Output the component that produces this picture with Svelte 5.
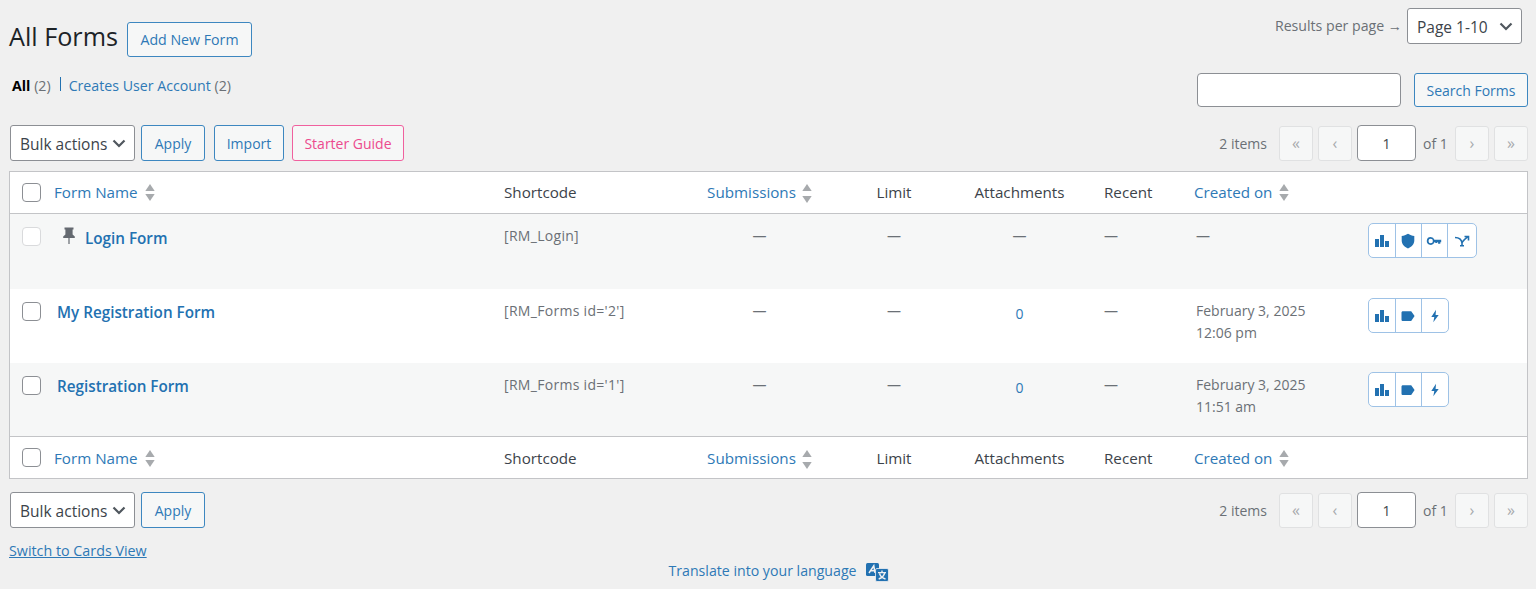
<script lang="ts">
  interface Form {
    name: string;
    shortcode: string;
    attachments: string;
    created: string[];
    pinned?: boolean;
    actions: string[];
  }

  const forms: Form[] = [
    { name: 'Login Form', shortcode: '[RM_Login]', attachments: '—', created: ['—'], pinned: true, actions: ['chart', 'shield', 'key', 'split'] },
    { name: 'My Registration Form', shortcode: "[RM_Forms id='2']", attachments: '0', created: ['February 3, 2025', '12:06 pm'], actions: ['chart', 'label', 'bolt'] },
    { name: 'Registration Form', shortcode: "[RM_Forms id='1']", attachments: '0', created: ['February 3, 2025', '11:51 am'], actions: ['chart', 'label', 'bolt'] },
  ];

  let search = $state('');
</script>

{#snippet chevron()}
  <svg class="chevron" viewBox="0 0 14 9" width="14" height="9"><path d="M1.500 1.500 7 7l5.500-5.500" fill="none" stroke="#50575e" stroke-width="2.200"/></svg>
{/snippet}

{#snippet sorter(wide: boolean)}
  <span class="sorter" class:wide>
    <svg viewBox="0 0 10 7" width="10" height="7"><path d="M5 0l4.700 7H.3z" fill="#a7aaad"/></svg>
    <svg viewBox="0 0 10 7" width="10" height="7"><path d="M5 7l4.700-7H.3z" fill="#a7aaad"/></svg>
  </span>
{/snippet}

{#snippet icon(name: string)}
  <svg viewBox="0 0 16 16" width="16" height="16" fill="#2271b1">
    {#if name === 'chart'}
      <path d="M1 6h4v8H1zM6 2h4v12H6zM11 8h4v6h-4z"/>
    {:else if name === 'shield'}
      <path d="M8 .8C10.100 2 12 2.700 14.300 3v4.500c0 3.700-2.600 6.400-6.300 8-3.700-1.600-6.300-4.300-6.300-8V3C4 2.700 5.900 2 8 .8z"/>
    {:else if name === 'key'}
      <path fill-rule="evenodd" d="M4.700 4.100a3.900 3.900 0 0 1 3.700 2.700h6.800v2.400h-.9v1.500h-2.200V9.200h-.9v.9H9.300v-.9h-.9A3.900 3.900 0 1 1 4.700 4.100zm0 1.700a2.200 2.200 0 1 0 0 4.400 2.200 2.200 0 0 0 0-4.400z"/>
    {:else if name === 'split'}
      <path d="M1 4.500C4.500 4.500 7.500 6.500 8 10v3M8 10c.5-2 2.500-3.500 5.500-6M6 12.800h4M10.500 3.500h4v4" fill="none" stroke="#2271b1" stroke-width="1.600"/>
    {:else if name === 'label'}
      <path d="M3 3.200h8.200L14.600 8l-3.400 5H3c-1 0-1.500-.5-1.500-1.500v-6.800c0-1 .5-1.500 1.500-1.500z"/>
    {:else}
      <path d="M9 1.800 4.300 9h3L6.300 14.300 11.700 7H8.600z"/>
    {/if}
  </svg>
{/snippet}

{#snippet pagination()}
  <div class="pages">
    <span class="count">2 items</span>
    <button class="page" disabled>«</button>
    <button class="page" disabled>‹</button>
    <input class="current" value="1" />
    <span class="total">of 1</span>
    <button class="page" disabled>›</button>
    <button class="page" disabled>»</button>
  </div>
{/snippet}

{#snippet columns()}
  <div class="row head">
    <div><input type="checkbox" /></div>
    <div><a href="#top">Form Name</a>{@render sorter(false)}</div>
    <div>Shortcode</div>
    <div class="mid"><a href="#top">Submissions</a>{@render sorter(true)}</div>
    <div class="mid">Limit</div>
    <div class="mid">Attachments</div>
    <div>Recent</div>
    <div><a href="#top">Created on</a>{@render sorter(false)}</div>
    <div></div>
  </div>
{/snippet}

<div class="wrap">
  <header>
    <div class="left">
      <div class="title">
        <h1>All Forms</h1>
        <button class="btn add">Add New Form</button>
      </div>
      <div class="filters">
        <span><strong>All</strong> (2)</span>
        <span class="sep"></span>
        <span><a href="#top">Creates User Account</a> (2)</span>
      </div>
    </div>
    <div class="right">
      <div class="per-page">
        <span>Results per page →</span>
        <button class="select">Page 1-10 {@render chevron()}</button>
      </div>
      <div class="search">
        <input type="text" bind:value={search} />
        <button class="btn">Search Forms</button>
      </div>
    </div>
  </header>

  <div class="tablenav">
    <button class="select bulk">Bulk actions {@render chevron()}</button>
    <button class="btn apply">Apply</button>
    <button class="btn import">Import</button>
    <button class="btn guide">Starter Guide</button>
    {@render pagination()}
  </div>

  <div class="table">
    {@render columns()}
    {#each forms as form}
      <div class="row item">
        <div><input type="checkbox" disabled={form.pinned} /></div>
        <div class="name" class:pinned={form.pinned}>
          {#if form.pinned}
            <svg class="pin" viewBox="0 0 12 17" width="12" height="17"><path d="M1.500.5h9v2H9.600v5l2.200 2v1.600H6.600V17H5.400v-5.900H.2V9.500l2.200-2v-5h-.9z" fill="#646970"/></svg>
          {/if}
          <a href="#top">{form.name}</a>
        </div>
        <div class="code">{form.shortcode}</div>
        <div class="mid">—</div>
        <div class="mid">—</div>
        <div class="mid">
          {#if form.attachments === '0'}<a class="zero" href="#top">0</a>{:else}{form.attachments}{/if}
        </div>
        <div>—</div>
        <div class="created">
          {#each form.created as line}<div>{line}</div>{/each}
        </div>
        <div>
          <div class="actions">
            {#each form.actions as action}
              <button class={action}>{@render icon(action)}</button>
            {/each}
          </div>
        </div>
      </div>
    {/each}
    {@render columns()}
  </div>

  <div class="tablenav bottom">
    <button class="select bulk">Bulk actions {@render chevron()}</button>
    <button class="btn apply">Apply</button>
    {@render pagination()}
  </div>

  <a class="switch" href="#top">Switch to Cards View</a>

  <footer>
    <a href="#top">Translate into your language</a>
    <svg viewBox="0 0 23 19" width="23" height="19">
      <rect x="0" y="0" width="13" height="13" rx="1.500" fill="#2271b1"/>
      <path d="M3 10 7.800 2.800 9 10M4.500 7.800h4" fill="none" stroke="#f0f0f1" stroke-width="1.500"/>
      <rect x="9.500" y="5.500" width="13" height="13" rx="1.500" fill="#2271b1" stroke="#f0f0f1" stroke-width=".8"/>
      <path d="M12 9.600h8M16 7.500v2M18.700 10c-.8 3-3 5-6 6M13.500 10.500c.8 2.600 3 4.700 6 5.500" fill="none" stroke="#f0f0f1" stroke-width="1.400"/>
    </svg>
  </footer>
</div>

<style>
  :global(body) {
    background: #f0f0f0;
    overflow: hidden;
  }

  .wrap {
    width: 1536px;
    height: 589px;
    box-sizing: border-box;
    padding: 8px 8px 0 9px;
    font-family: "Open Sans", "Noto Sans", sans-serif;
    font-size: 14px;
    line-height: 22px;
    color: #6b7076;
    background: #f0f0f0;
  }
  .wrap * { box-sizing: border-box; }

  a { color: #2e79b6; text-decoration: none; }
  button, input { font: inherit; margin: 0; }

  /* ── Heading, filters and search ── */
  header { display: flex; justify-content: space-between; height: 117px; }
  .title { display: flex; align-items: flex-start; padding-top: 14px; }
  h1 {
    width: 118px;
    margin: 0;
    font-size: 25.200px;
    font-weight: 400;
    line-height: 29px;
    white-space: nowrap;
    color: #1d2327;
  }
  .btn {
    height: 35px;
    padding: 1px 0 0;
    border: 1px solid #3d87c0;
    border-radius: 3px;
    background: #f6f7f7;
    color: #2e79b6;
    text-align: center;
    white-space: nowrap;
  }
  .add { width: 125px; font-size: 14.200px; }
  .filters { display: flex; padding: 18px 0 0 3px; font-size: 14.200px; }
  .filters strong { color: #000; }
  .sep { width: 1px; height: 14px; margin: 2px 8px 0 9px; background: #2271b1; }

  .right { display: flex; flex-direction: column; align-items: flex-end; }
  .per-page { display: flex; align-items: center; gap: 5px; padding-right: 6px; font-size: 14.150px; }
  .select {
    display: flex;
    align-items: center;
    justify-content: space-between;
    width: 115px;
    height: 36px;
    padding: 1px 8px 0 9px;
    border: 1px solid #8c8f94;
    border-radius: 3px;
    background: #fff;
    color: #3c434a;
    font-size: 15.500px;
    white-space: nowrap;
  }
  .search { display: flex; gap: 13px; margin-top: 29px; }
  .search input { width: 204px; height: 34px; border: 1px solid #8c8f94; border-radius: 4px; background: #fff; }
  .search .btn { width: 114px; height: 34px; }

  /* ── Bulk actions and paging ── */
  .tablenav { display: flex; align-items: center; height: 36px; padding-left: 1px; }
  .tablenav .btn { height: 36px; }
  .bulk { width: 125px; }
  .apply { width: 64px; margin-left: 6px; }
  .import { width: 70px; margin-left: 9px; }
  .tablenav .guide { width: 112px; margin-left: 8px; border-color: #f0609e; color: #ec4a8e; }
  .pages { display: flex; align-items: center; margin-left: auto; }
  .count { margin-right: 12px; padding-top: 2px; }
  .page {
    width: 34px;
    height: 35px;
    margin: 1px 0 0 5px;
    padding: 0 0 2px;
    border: 1px solid #e0e1e2;
    border-radius: 3px;
    background: #f6f7f7;
    color: #a7aaad;
    font-size: 16px;
  }
  .count + .page { margin-left: 0; }
  .current {
    width: 59px;
    height: 36px;
    margin-left: 5px;
    padding: 1px 0 0;
    border: 1px solid #8c8f94;
    border-radius: 4px;
    background: #fff;
    color: #3c434a;
    text-align: center;
  }
  .total { width: 32px; margin: 0 0 0 7px; padding-top: 2px; white-space: nowrap; }
  .total + .page { margin-left: 0; }

  /* ── Forms list ── */
  .table { margin-top: 10px; border: 1px solid #c3c4c7; background: #fff; }
  .row { display: grid; grid-template-columns: 44px 450px 162px 187px 82px 169px 90px 174px 1fr; }
  .mid { text-align: center; }
  .head { height: 42px; color: #3c434a; font-size: 15.200px; line-height: 41px; }
  .head:first-child { border-bottom: 1px solid #c3c4c7; }
  .head:last-child { border-top: 1px solid #c3c4c7; line-height: 42px; }
  .sorter { display: inline-flex; flex-direction: column; gap: 3px; margin: -3px 0 0 7px; vertical-align: middle; }
  .sorter.wide { gap: 5px; margin-top: -1px; margin-left: 6px; }

  input[type='checkbox'] {
    appearance: none;
    display: block;
    width: 19px;
    height: 19px;
    margin: 11px 0 0 12px;
    border: 1px solid #8c8f94;
    border-radius: 4px;
    background: #fff;
  }
  input[type='checkbox']:disabled { border-color: #d9dadc; }

  .item { height: 74px; padding-top: 11px; }
  .item:nth-child(2) { height: 75px; }
  .item:nth-child(4) { height: 73px; }
  .item:nth-child(even) { background: #f6f7f7; }
  .item input[type='checkbox'] { margin-top: 2px; }
  .name { padding: 1px 0 0 3px; font-size: 15.250px; font-weight: 600; }
  .name.pinned { padding-top: 2px; }
  .name a { color: #2271b1; }
  .pin { margin: 0 6px 0 6px; vertical-align: 0; }
  .code { letter-spacing: .3px; }
  .zero { position: relative; top: 3px; }
  .created { padding-left: 2px; }
  .actions { display: inline-flex; height: 35px; margin-top: -2px; border: 1px solid #9ec2e6; border-radius: 5px; background: #fff; }
  .actions button { display: flex; align-items: center; justify-content: center; width: 26px; padding: 0 1px 0 0; border: 0; background: none; }
  .actions button + button { border-left: 1px solid #9ec2e6; }
  .actions .split { width: 29px; }
  .actions .bolt { width: 27px; }
  .actions svg { flex-shrink: 0; }

  /* ── Below the list ── */
  .bottom { margin-top: 13px; }
  .switch { display: block; width: max-content; margin-top: 12px; font-size: 14.300px; text-decoration: underline; }
  footer { display: flex; justify-content: center; gap: 9px; margin-top: -2px; padding-left: 20px; font-size: 14.150px; }
  footer svg { margin-top: 3px; }
</style>
